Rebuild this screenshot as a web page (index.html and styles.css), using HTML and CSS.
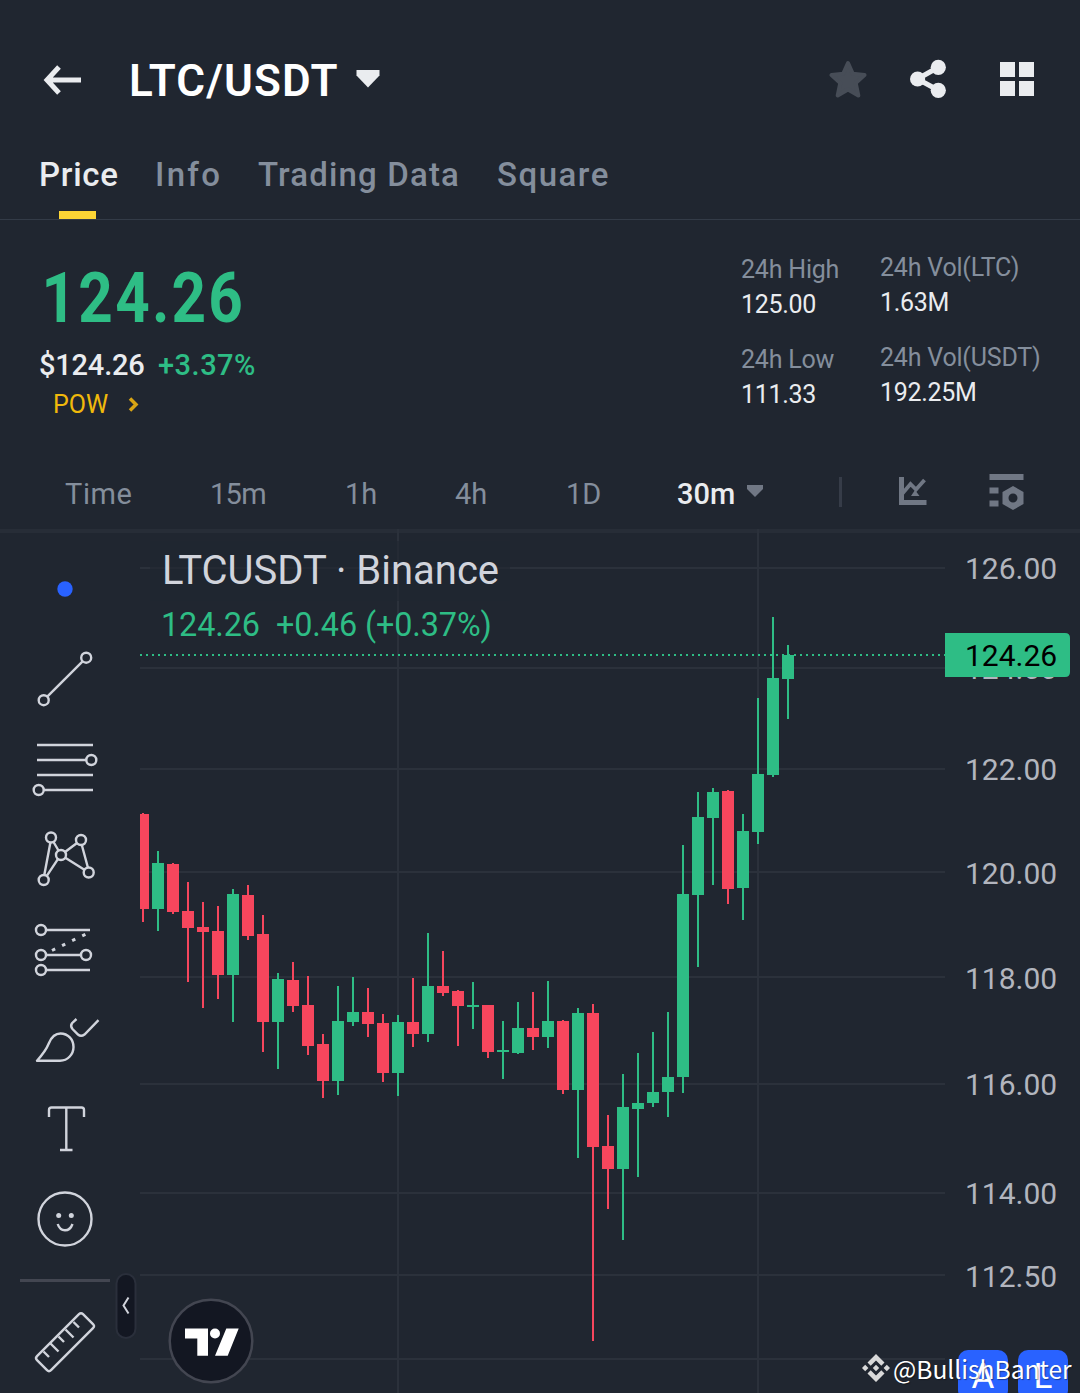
FILE: index.html
```html
<!DOCTYPE html>
<html lang="en">
<head>
<meta charset="utf-8">
<title>LTC/USDT</title>
<link rel="stylesheet" href="styles.css">
</head>
<body>
<div class="app">
  <header class="header">
    <svg class="back" width="38" height="30" viewBox="0 0 38 30"><path d="M16 2 4 15 16 28M4 15H38" fill="none" stroke="#eaecef" stroke-width="5"/></svg>
    <h1 class="title">LTC/USDT</h1>
    <svg class="caret" width="24" height="18" viewBox="0 0 24 18"><path d="M.5 0H23.500V5.500L12 17.500.5 5.500Z" fill="#eaecef"/></svg>
    <div class="actions">
      <svg class="star" width="38" height="40" viewBox="0 0 38 40"><path d="M19 3 23.800 13.800 35.500 15 26.700 23 29.300 35.500 19 29.500 8.700 35.500 11.300 23 2.500 15 14.200 13.800Z" fill="#474d57" stroke="#474d57" stroke-width="4" stroke-linejoin="round"/></svg>
      <svg width="38" height="40" viewBox="0 0 38 40"><path d="M28.300 8.300 7.500 20 28.300 31.300" fill="none" stroke="#eaecef" stroke-width="5"/><g fill="#eaecef"><circle cx="28.300" cy="8.300" r="7.600"/><circle cx="7.600" cy="20" r="7.600"/><circle cx="28.300" cy="31.300" r="7.600"/></g></svg>
      <svg width="34" height="34" viewBox="0 0 34 34"><path d="M0 0H15V15H0ZM19 0H34V15H19ZM0 19H15V34H0ZM19 19H34V34H19Z" fill="#eaecef"/></svg>
    </div>
  </header>

  <nav class="tabs">
    <a class="tab tab-price active">Price</a>
    <a class="tab tab-info">Info</a>
    <a class="tab tab-data">Trading Data</a>
    <a class="tab tab-square">Square</a>
  </nav>

  <section class="summary">
    <div class="quote">
      <div class="last">124.26</div>
      <div class="change"><span class="usd">$124.26</span><span class="pct">+3.37%</span></div>
      <div class="tag-row"><span class="pow">POW</span><svg width="11" height="16" viewBox="0 0 11 16"><path d="M2 1.500 8 7.500 2 13.500" fill="none" stroke="#d9a514" stroke-width="3.500"/></svg></div>
    </div>
    <dl class="stats stats-range">
      <dt>24h High</dt><dd>125.00</dd>
      <dt>24h Low</dt><dd>111.33</dd>
    </dl>
    <dl class="stats stats-volume">
      <dt>24h Vol(LTC)</dt><dd>1.63M</dd>
      <dt>24h Vol(USDT)</dt><dd>192.25M</dd>
    </dl>
  </section>

  <div class="intervals">
    <span class="time">Time</span><span class="m15">15m</span><span>1h</span><span>4h</span><span>1D</span>
    <span class="selected">30m</span>
    <svg class="mini-caret" width="16" height="12" viewBox="0 0 16 12"><path d="M0 0H16V4L8 12 0 4Z" fill="#707784"/></svg>
    <i class="divider"></i>
    <svg class="ind-icon" width="28" height="28" viewBox="0 0 28 28"><path d="M2.500 0V25.500H27.500" fill="none" stroke="#707784" stroke-width="5"/><path d="M3 17 11.500 7 17 12.500 25.500 3" fill="none" stroke="#707784" stroke-width="3.800"/><path d="M16 13 20.500 19H12Z" fill="#707784"/></svg>
    <svg class="set-icon" width="35" height="36" viewBox="0 0 35 36"><g fill="#707784"><path d="M.5 0H34.500V6H.5ZM.5 13.500H9.500V19.500H.5ZM.5 26.500H9.500V32.500H.5Z"/><path fill-rule="evenodd" d="M24 12 34.500 18V30L24 36 13.500 30V18ZM24 19.500A4.500 4.500 0 1 0 24 28.500 4.500 4.500 0 1 0 24 19.500Z"/></g></svg>
  </div>

  <main class="workspace">
    <aside class="tools">
      <svg class="tool" viewBox="0 0 90 90"><circle cx="45" cy="45" r="7.700" fill="#2962ff" stroke="none"/></svg>
      <svg class="tool" viewBox="0 0 90 90"><circle cx="23.700" cy="66.200" r="5"/><circle cx="66.200" cy="23.700" r="5"/><path d="M27.300 62.600 62.600 27.300"/></svg>
      <svg class="tool" viewBox="0 0 90 90"><path d="M17 21H73M17 36H66M17 51H73M24 66H73"/><circle cx="71.300" cy="36" r="5"/><circle cx="18.700" cy="66" r="5"/></svg>
      <svg class="tool" viewBox="0 0 90 90"><circle cx="31" cy="23.500" r="5"/><circle cx="61" cy="26" r="5"/><circle cx="41" cy="41" r="5"/><circle cx="23.700" cy="66" r="5"/><circle cx="68.700" cy="58.500" r="5"/><path d="M30.400 28.500 24.300 61M33.500 28 38.500 36.500M45 38 57 29M45.300 43.800 64.400 55.800M37.900 45.200 26.800 61.900M61.800 31 67.900 53.500"/></svg>
      <svg class="tool" viewBox="0 0 90 90"><circle cx="21" cy="26" r="5"/><circle cx="21" cy="51" r="5"/><circle cx="21" cy="66" r="5"/><circle cx="66" cy="51" r="5"/><path d="M26 26H70M26 51H61M26 66H70"/><path d="M32 46.500 66 30" stroke-width="3" stroke-dasharray="3.500 7.700"/></svg>
      <svg class="tool" viewBox="0 0 90 90"><path d="M17 66.700C24 59 27 54 29 49 31.500 43 35 39.500 40.500 39.500 48 39.500 53.500 45.500 53.500 53 53.500 60 48 66.700 40 66.700Z" stroke-linejoin="round"/><path d="M56.500 25 52 29.200Q50 32 52.500 35L58 40.500Q61 43 64.500 40.500L78.500 26.200"/></svg>
      <svg class="tool" viewBox="0 0 90 90"><path d="M29 33V26Q29 23.500 31.500 23.500H61.500Q64 23.500 64 26V33M46.300 24V66M40 66H52.500"/></svg>
      <svg class="tool" viewBox="0 0 90 90"><circle cx="45" cy="45" r="26.500"/><path d="M37.700 50Q39.700 56.300 45 56.300T52.500 50"/><circle class="dot" cx="38.700" cy="41.500" r="2.500"/><circle class="dot" cx="51.300" cy="41.500" r="2.500"/></svg>
      <i class="tool-sep"></i>
      <svg class="tool" viewBox="0 0 90 90"><path d="M59 17.200Q61 15.200 63 17.200L73 27.200Q75 29.200 73 31.200L31 73.200Q29 75.200 27 73.200L17 63.200Q15 61.200 17 59.200Z"/><path d="M23.500 54.500 29 60M30.500 46.500 38.500 54.500M38.500 39.500 44 45M45.500 32.500 53.500 40.500M53.500 25 59 30.500"/></svg>
    </aside>

    <div class="plot">
      <svg class="candles" id="candles" width="805" height="864" viewBox="140 529 805 864" shape-rendering="crispEdges"></svg>
      <div class="legend">
        <div class="symbol">LTCUSDT · Binance</div>
        <div class="ohlc"><span>124.26</span><span>+0.46 (+0.37%)</span></div>
      </div>
      <svg class="tv-logo" width="86" height="86" viewBox="168 1298.500 86 86"><circle cx="211" cy="1341.500" r="41.300" fill="#131722" stroke="#434651" stroke-width="2.500"/><path d="M185 1329H208V1356.300H197.300V1339H185ZM226.300 1329H238.700L227.700 1356.300H215Z" fill="#fff"/><circle cx="215" cy="1334" r="5" fill="#fff"/></svg>
      <svg class="handle" width="22" height="68" viewBox="0 0 22 68"><rect x="1.500" y="2" width="19" height="64" rx="9.500" fill="#131722" stroke="#2a2f3b" stroke-width="2"/><path d="M13.500 25.500 8.500 33.500 13.500 41.500" fill="none" stroke="#d1d4dc" stroke-width="2"/></svg>
    </div>

    <div class="axis">
      <svg width="135" height="860" viewBox="945 533 135 860">
        <g class="axis-label"><text x="965" y="579">126.00</text><text x="965" y="679">124.00</text><text x="965" y="780">122.00</text><text x="965" y="884">120.00</text><text x="965" y="989">118.00</text><text x="965" y="1095">116.00</text><text x="965" y="1204">114.00</text><text x="965" y="1287">112.50</text></g>
        <path d="M945 633H1065Q1070 633 1070 638V672Q1070 677 1065 677H945Z" fill="#2ebd85"/>
        <text class="axis-now" x="965" y="666">124.26</text>
      </svg>
      <div class="scale-btns"><span>A</span><span>L</span></div>
    </div>

    <div class="watermark">
      <svg width="28" height="28" viewBox="0 0 28 28"><path d="M14 0 22.500 8.500 19.300 11.700 14 6.400 8.700 11.700 5.500 8.500ZM14 28 22.500 19.500 19.300 16.300 14 21.600 8.700 16.300 5.500 19.500ZM3.200 10.800 6.400 14 3.200 17.200 0 14ZM24.800 10.800 28 14 24.800 17.200 21.600 14ZM14 10.800 17.200 14 14 17.200 10.800 14Z" fill="#d9d9d9"/></svg>
      <span>@BullishBanter</span>
    </div>
  </main>
</div>
<script src="chart.js"></script>
</body>
</html>
```
FILE: styles.css
```css
* { box-sizing: border-box; }
body { margin: 0; background: #202630; font-family: Roboto, "Liberation Sans", sans-serif; color: #eaecef; }
svg { display: block; flex: none; }
.app { width: 1080px; height: 1393px; overflow: hidden; display: flex; flex-direction: column; }

.header { height: 130px; padding: 30px 46px 0 43px; display: flex; align-items: center; flex: none; }
.back { margin-top: -1px; }
.title { margin: 2px 0 0 48px; width: 227px; font-size: 44px; font-weight: 600; line-height: 60px; letter-spacing: 1.1px; color: #fff; white-space: nowrap; }
.caret { margin: -2px 0 0 0; }
.actions { margin-left: auto; display: flex; align-items: center; margin-top: -2px; }
.actions .star { margin: 2px 0 0; }
.actions svg:nth-child(2) { margin-left: 43px; }
.actions svg:nth-child(3) { margin-left: 52px; }

.tabs { height: 90px; flex: none; padding-left: 39px; display: flex; border-bottom: 1px solid #333b47; }
.tab { position: relative; height: 89px; line-height: 89px; font-size: 33px; font-weight: 500; color: #848e9c; white-space: nowrap; }
.tab-price { width: 116px; letter-spacing: .7px; }
.tab-info { width: 103px; letter-spacing: 2.3px; }
.tab-data { width: 239px; letter-spacing: 1.15px; }
.tab-square { letter-spacing: 1.5px; }
.tab.active { color: #eaecef; }
.tab.active::after { content: ""; position: absolute; left: 20px; bottom: 0; width: 37px; height: 8px; background: #fcd535; }

.summary { height: 239px; flex: none; display: flex; align-items: flex-start; }
.quote { width: 741px; padding: 38px 0 0 39px; }
.last { font-size: 70px; font-weight: 700; line-height: 80px; letter-spacing: 2.6px; color: #2ebd85; padding-left: 3px; transform: scaleX(.86); transform-origin: 0 50%; }
.change { display: flex; margin-top: 9px; font-size: 29px; font-weight: 500; line-height: 36px; }
.usd { width: 119px; letter-spacing: -.2px; }
.pct { color: #2ebd85; letter-spacing: .5px; }
.tag-row { display: flex; align-items: center; margin-top: 4px; padding-left: 14px; font-size: 25px; line-height: 36px; color: #f0b90b; }
.pow { width: 75px; }
.stats { margin: 0; font-size: 25px; line-height: 35px; white-space: nowrap; }
.stats dt { color: #848e9c; letter-spacing: -.2px; }
.stats dd { margin: 0 0 20px; letter-spacing: -.3px; }
.stats-range { width: 139px; padding-top: 32px; }
.stats-volume { padding-top: 30px; }

.intervals { height: 74px; flex: none; padding-left: 65px; border-bottom: 4px solid #272d37; display: grid; grid-template-columns: 145px 135px 110px 111px 111px 70px 92px 60px 90px 40px; align-items: center; font-size: 29px; color: #848e9c; }
.intervals .selected { color: #eaecef; font-weight: 500; }
.intervals .time { letter-spacing: .6px; }
.intervals .m15 { letter-spacing: -.7px; }
.mini-caret { margin-top: -6px; }
.divider { width: 3px; height: 30px; background: #363c48; margin-top: -4px; }
.ind-icon { margin-top: -6px; }
.set-icon { margin-top: -4px; }

.workspace { position: relative; height: 860px; display: flex; }
.tools { width: 140px; padding: 11px 0 0 20px; flex: none; }
.tool { width: 90px; height: 90px; fill: none; stroke: #d1d4dc; stroke-width: 2.4; }
.tool .dot { fill: #d1d4dc; stroke: none; }
.tool-sep { display: block; width: 90px; height: 3px; margin: 15px 0; background: #434651; }
.plot { position: relative; width: 805px; flex: none; }
.candles { margin-top: -4px; }
.legend { position: absolute; left: 10px; top: 8px; width: 360px; padding-left: 11px; }
.symbol { font-size: 40px; line-height: 60px; height: 60px; color: #d1d4dc; background: #20263099; margin-left: -11px; padding-left: 12px; white-space: nowrap; }
.ohlc { display: flex; gap: 16px; font-size: 32.4px; line-height: 49px; color: #2ebd85; white-space: nowrap; letter-spacing: -.1px; }
.tv-logo { position: absolute; left: 28px; top: 765px; }
.handle { position: absolute; left: -25px; top: 738.5px; }
.axis { position: relative; width: 135px; flex: none; }
.axis-label { font-size: 30px; fill: #b2b5be; }
.axis-now { font-size: 30px; fill: #000; }
.scale-btns { position: absolute; left: 13px; top: 817px; display: flex; gap: 10px; }
.scale-btns span { width: 50px; height: 50px; border-radius: 10px; background: #2962ff; color: #fff; font-size: 35px; line-height: 53px; text-align: center; }
.watermark { position: absolute; left: 862px; top: 819px; display: flex; align-items: center; gap: 3px; height: 32px; font: 24.6px/32px "Noto Sans CJK SC", "Noto Sans", sans-serif; color: #fff; white-space: nowrap; text-shadow: 1px 1px 1px #0006; }
```
FILE: chart.js
```js
const GREEN = "#2ebd85", RED = "#f6465d";

// [up, body top, body bottom, high, low] for each half-hour candle
const candles = [
  [0,814,909,813,922],[1,863,909,851,931],[0,864,912,863,914],[0,911,928,882,982],
  [0,927,932,902,1008],[0,931,975,906,999],[1,894,975,889,1022],[0,895,936,885,940],
  [0,934,1022,915,1052],[1,979,1022,973,1069],[0,980,1006,962,1012],[0,1005,1046,976,1055],
  [0,1044,1081,1034,1098],[1,1021,1081,986,1095],[1,1012,1022,977,1026],[0,1012,1024,988,1037],
  [0,1023,1073,1014,1082],[1,1022,1073,1015,1096],[0,1022,1034,978,1047],[1,986,1034,933,1042],
  [0,986,993,951,996],[0,991,1006,990,1046],[1,1005,1007,982,1029],[0,1005,1052,1005,1058],
  [1,1050,1052,1021,1079],[1,1028,1053,1002,1054],[0,1028,1037,992,1050],[1,1021,1037,981,1048],
  [0,1021,1090,1020,1094],[1,1013,1090,1008,1158],[0,1013,1147,1004,1341],[0,1146,1169,1115,1209],
  [1,1107,1169,1074,1240],[1,1103,1109,1053,1177],[1,1092,1103,1032,1107],[1,1077,1092,1012,1117],
  [1,894,1077,845,1093],[1,817,895,792,967],[1,792,818,788,885],[0,791,889,790,904],
  [1,831,888,814,920],[1,774,832,698,844],[1,678,775,617,777],[1,655,679,645,719]
];

const rect = (x, y, w, h, fill) =>
  `<rect x="${x}" y="${y}" width="${w}" height="${h}" fill="${fill}"/>`;

let out = "";
for (const y of [568, 668, 769, 872, 977, 1084, 1193, 1275, 1359]) out += rect(140, y - 1, 805, 2, "#2b313b");
for (const x of [398, 758]) out += rect(x - 1, 529, 2, 864, "#2b313b");
for (let x = 140; x < 945; x += 6) out += rect(x, 654, 2, 2, GREEN);
candles.forEach(([up, top, bottom, high, low], i) => {
  const cx = 143 + 15 * i, color = up ? GREEN : RED;
  out += rect(cx - 1, high, 2, low - high, color);
  out += rect(cx - 6, top, 12, bottom - top, color);
});
document.getElementById("candles").innerHTML = out;
```
